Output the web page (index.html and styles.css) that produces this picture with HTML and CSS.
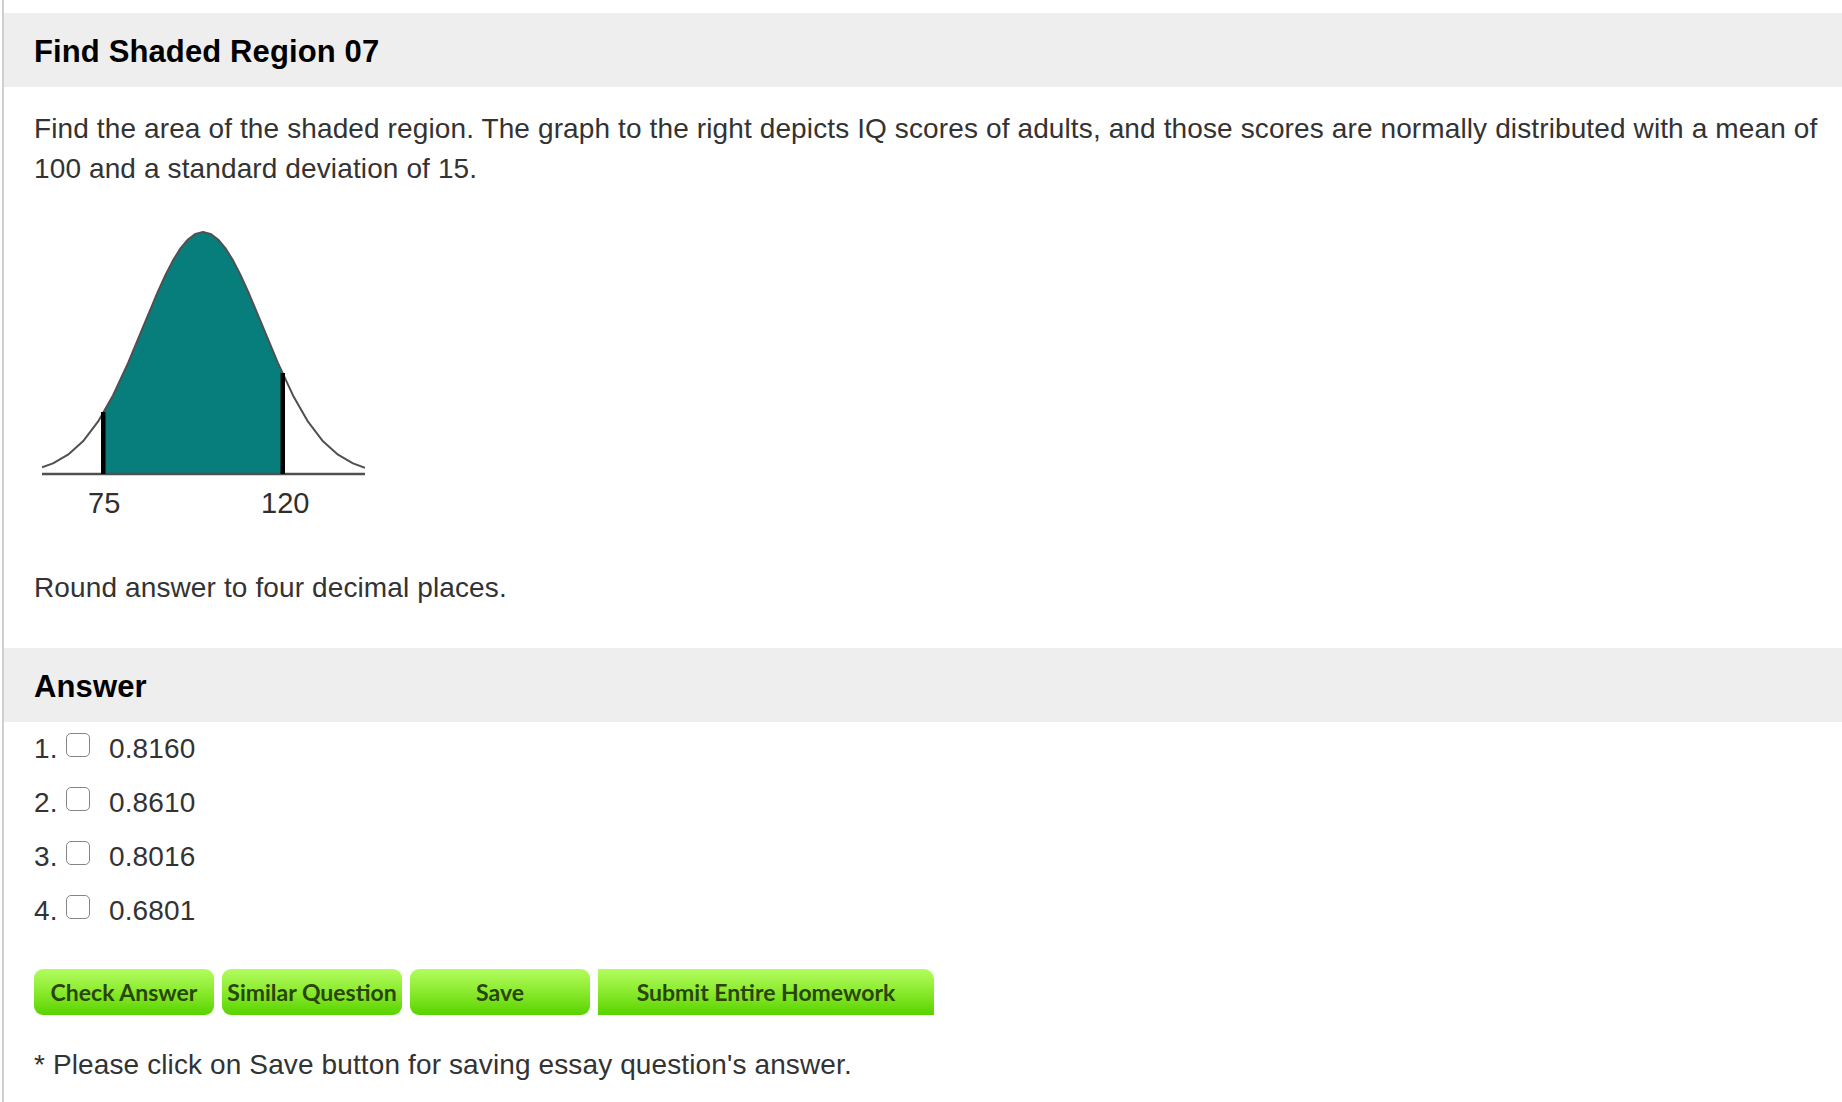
FILE: index.html
```html
<!DOCTYPE html>
<html lang="en">
<head>
<meta charset="utf-8">
<title>Find Shaded Region 07</title>
<link rel="stylesheet" href="styles.css">
</head>
<body>
<div class="page">
  <div class="band">
    <h1 class="band-title">Find Shaded Region 07</h1>
  </div>
  <div class="content">
    <p class="question">Find the area of the shaded region. The graph to the right depicts IQ scores of adults, and those scores are normally distributed with a mean of 100 and a standard deviation of 15.</p>
    <div class="graph">
      <svg width="323" height="295" viewBox="0 0 323 295" xmlns="http://www.w3.org/2000/svg">
        <polygon class="shade" points="61,185.6 71,167.4 86,135.2 101,99.2 116,63.3 123.5,46.9 131,32.4 138.5,20.4 146,11.5 153.5,5.9 161,4 168.5,5.9 176,11.5 183.5,20.4 191,32.4 198.5,46.9 206,63.3 221,99.2 236,135.2 241,146.5 241,246 61,246"/>
        <polyline class="curve" points="0,239.4 11,235.4 26,226.7 41,213.3 56,193.7 71,167.4 86,135.2 101,99.2 116,63.3 123.5,46.9 131,32.4 138.5,20.4 146,11.5 153.5,5.9 161,4 168.5,5.9 176,11.5 183.5,20.4 191,32.4 198.5,46.9 206,63.3 221,99.2 236,135.2 251,167.4 266,193.7 281,213.3 296,226.7 311,235.4 323,239.7"/>
        <line class="axis" x1="0" y1="246" x2="323" y2="246"/>
        <rect class="bar" x="59" y="184" width="4.5" height="62"/>
        <rect class="bar" x="238.5" y="145" width="4.5" height="101"/>
        <text class="label" x="46" y="285">75</text>
        <text class="label" x="219" y="285">120</text>
      </svg>
    </div>
    <p class="instruction">Round answer to four decimal places.</p>
  </div>
  <div class="band">
    <h2 class="band-title">Answer</h2>
  </div>
  <ol class="options">
    <li class="option"><span class="num">1.</span><input class="check" type="checkbox"><span class="value">0.8160</span></li>
    <li class="option"><span class="num">2.</span><input class="check" type="checkbox"><span class="value">0.8610</span></li>
    <li class="option"><span class="num">3.</span><input class="check" type="checkbox"><span class="value">0.8016</span></li>
    <li class="option"><span class="num">4.</span><input class="check" type="checkbox"><span class="value">0.6801</span></li>
  </ol>
  <div class="buttons">
    <button class="btn" type="button">Check Answer</button>
    <button class="btn" type="button">Similar Question</button>
    <button class="btn" type="button">Save</button>
    <button class="btn btn-wide" type="button">Submit Entire Homework</button>
  </div>
  <p class="note">* Please click on Save button for saving essay question's answer.</p>
</div>
</body>
</html>
```
FILE: styles.css
```css
html, body {
  margin: 0;
  padding: 0;
  background: #ffffff;
}

body {
  font-family: "Liberation Sans", Arial, Helvetica, sans-serif;
  color: #333333;
  font-size: 28px;
  letter-spacing: 0.12px;
}

.page {
  margin-left: 2px;
  border-left: 2px solid #cfcfcf;
  padding-top: 13px;
  min-height: 1102px;
  box-sizing: border-box;
}

.band {
  background: #eeeeee;
  height: 74px;
  box-sizing: border-box;
  display: flex;
  align-items: center;
  padding: 2px 0 0 30px;
}

.band-title {
  margin: 0;
  font-size: 31px;
  font-weight: bold;
  color: #000000;
  line-height: 1;
}

.content {
  padding: 22px 15px 40px 30px;
}

.question {
  margin: 0;
  line-height: 40px;
}

.graph {
  margin-top: 39px;
  margin-left: 8px;
  width: 323px;
  height: 295px;
}

.graph svg {
  display: block;
}

.shade {
  fill: #077e7c;
}

.curve {
  fill: none;
  stroke: #505050;
  stroke-width: 2;
  stroke-linejoin: round;
}

.axis {
  stroke: #505050;
  stroke-width: 2.5;
}

.bar {
  fill: #000000;
}

.label {
  font-family: "Liberation Sans", Arial, sans-serif;
  font-size: 29px;
  letter-spacing: 0;
  fill: #2f2f2f;
}

.instruction {
  margin: 45px 0 0;
  line-height: 40px;
}

.options {
  list-style: none;
  margin: 0;
  padding: 0 0 0 30px;
}

.option {
  display: flex;
  align-items: center;
  height: 54px;
  line-height: 40px;
}

.num {
  width: 32px;
}

.check {
  appearance: none;
  -webkit-appearance: none;
  margin: 0 19px 9px 0;
  width: 24px;
  height: 24px;
  box-sizing: border-box;
  border: 1.5px solid #858585;
  border-radius: 5px;
  background: #ffffff;
}

.buttons {
  display: flex;
  gap: 8px;
  margin-top: 31px;
  padding-left: 30px;
}

.btn {
  width: 180px;
  height: 46px;
  border: none;
  border-radius: 9px;
  background: linear-gradient(to bottom, #b3fc60 0%, #8eec32 45%, #58d300 100%);
  color: #2a4606;
  font-family: Lato, "Liberation Sans", sans-serif;
  font-weight: bold;
  font-size: 23px;
  letter-spacing: 0;
  padding: 0;
  cursor: pointer;
}

.btn-wide {
  width: 336px;
  border-radius: 0 10px 0 0;
}

.note {
  margin: 30px 0 0;
  padding-left: 30px;
  line-height: 40px;
}
```
